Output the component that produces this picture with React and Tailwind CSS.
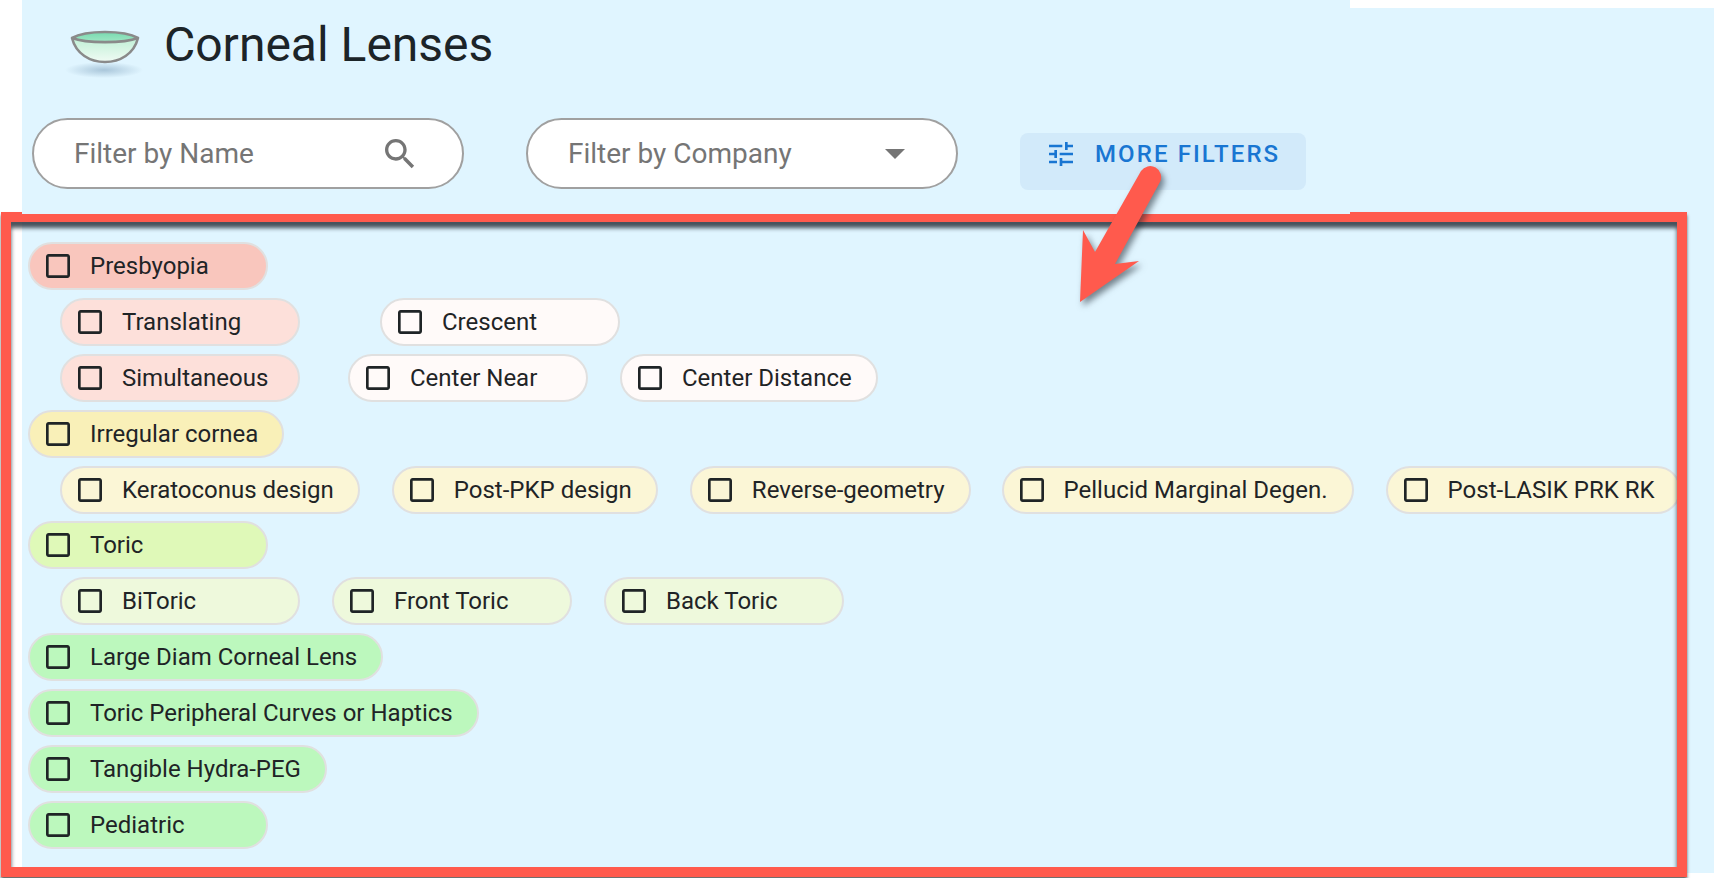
import React from "react";

const Box = () => (
  <svg viewBox="0 0 24 24" className="w-8 h-8 shrink-0" fill="#1f2426">
    <path d="M19 5v14H5V5h14m0-2H5c-1.1 0-2 .9-2 2v14c0 1.1.9 2 2 2h14c1.1 0 2-.9 2-2V5c0-1.1-.9-2-2-2z" />
  </svg>
);

const Chip = ({ label, bg, className = "" }) => (
  <div
    className={`flex items-center h-[48px] min-w-[240px] pl-[12px] pr-[24px] gap-[16px] rounded-full border-2 border-[#e0e0e0] text-[24px] leading-none text-[#1f2426] whitespace-nowrap ${bg} ${className}`}
  >
    <Box />
    <span>{label}</span>
  </div>
);

const Row = ({ children }) => <div className="flex pl-[32px]">{children}</div>;

const Lens = () => (
  <svg viewBox="0 0 90 60" className="w-[90px] h-[60px] shrink-0">
    <defs>
      <linearGradient id="lensBody" x1="0" y1="0" x2="0" y2="1">
        <stop offset="0" stopColor="#c0f0d6" />
        <stop offset="1" stopColor="#f0fbf4" />
      </linearGradient>
      <linearGradient id="lensTop" x1="0" y1="0" x2="0" y2="1">
        <stop offset="0" stopColor="#78dab0" />
        <stop offset="1" stopColor="#9fe6c4" />
      </linearGradient>
      <radialGradient id="lensShadow">
        <stop offset="0" stopColor="#a9c6da" />
        <stop offset="1" stopColor="#e0f5ff" />
      </radialGradient>
    </defs>
    <ellipse cx="42" cy="52" rx="39" ry="8" fill="url(#lensShadow)" />
    <path d="M10 20 C14 36 28 44 43 44 C58 44 72 36 76 20 C62 25.5 24 25.5 10 20Z" fill="url(#lensBody)" />
    <path d="M10 20 C24 12 62 12 76 20 C62 25.5 24 25.5 10 20Z" fill="url(#lensTop)" />
    <path d="M10 20 C24 12 62 12 76 20 C62 25.5 24 25.5 10 20Z M10 20 C14 36 28 44 43 44 C58 44 72 36 76 20" fill="none" stroke="#8a8a8a" strokeWidth="2.6" strokeLinejoin="round" />
  </svg>
);

export default function App() {
  const red = "bg-[#f9c6bd]", red2 = "bg-[#fde0da]", white = "bg-[#fffaf9]";
  const y1 = "bg-[#f9f0b8]", y2 = "bg-[#fbf6d6]";
  const g1 = "bg-[#dff9b8]", g2 = "bg-[#eef9dc]", g3 = "bg-[#bcf8bd]";
  return (
    <div className="relative w-full h-[878px] overflow-hidden bg-white pl-[22px] font-['Roboto',sans-serif]">
      <div className="h-[873px] bg-[#e0f5ff]">
        <div className="relative z-10 flex flex-col w-[1328px] h-[214px] bg-[#e0f5ff]">
          <div className="flex items-center h-[88px] pl-[40px] gap-[12px] pt-[8px]">
            <Lens />
            <h1 className="text-[48px] leading-none text-[#1c2428] -mt-[7px]">Corneal Lenses</h1>
          </div>
          <div className="flex items-start pl-[10px] pt-[30px]">
            <div className="flex items-center justify-between w-[432px] h-[71px] rounded-full border-2 border-[#a0a0a0] bg-white pl-[40px] pr-[42px] text-[28px] text-[#757575]">
              <span>Filter by Name</span>
              <svg viewBox="0 0 24 24" className="w-[40px] h-[40px]" fill="#757575">
                <path d="M15.5 14h-.79l-.28-.27C15.41 12.59 16 11.11 16 9.5 16 5.91 13.09 3 9.5 3S3 5.91 3 9.5 5.91 16 9.5 16c1.61 0 3.09-.59 4.23-1.57l.27.28v.79l5 4.99L20.49 19l-4.99-5zm-6 0C7.01 14 5 11.99 5 9.5S7.01 5 9.5 5 14 7.01 14 9.5 11.99 14 9.5 14z" />
              </svg>
            </div>
            <div className="flex items-center justify-between w-[432px] h-[71px] ml-[62px] rounded-full border-2 border-[#a0a0a0] bg-white pl-[40px] pr-[51px] text-[28px] text-[#757575]">
              <span>Filter by Company</span>
              <svg viewBox="0 0 20 10" className="w-[20px] h-[10px]" fill="#757575">
                <path d="M0 0h20L10 10z" />
              </svg>
            </div>
            <div className="flex items-start w-[286px] h-[57px] ml-[62px] mt-[15px] rounded-lg bg-[#d2eafa] pl-[25px] pt-[5px] text-[#1976d2]">
              <svg viewBox="0 0 24 24" className="w-[32px] h-[32px]" fill="#1976d2">
                <path d="M3 17v2h6v-2H3zM3 5v2h10V5H3zm10 16v-2h8v-2h-8v-2h-2v6h2zM7 9v2H3v2h4v2h2V9H7zm14 4v-2H11v2h10zm-6-4h2V7h4V5h-4V3h-2v6z" />
              </svg>
              <span className="ml-[18px] text-[24px] leading-[32px] font-medium tracking-[2.1px]">MORE FILTERS</span>
            </div>
          </div>
        </div>

        <div className="flex flex-col gap-[7.9px] pl-[6px] pt-[28px]">
          <div className="flex"><Chip label="Presbyopia" bg={red} /></div>
          <Row>
            <Chip label="Translating" bg={red2} />
            <Chip label="Crescent" bg={white} className="ml-[80px]" />
          </Row>
          <Row>
            <Chip label="Simultaneous" bg={red2} />
            <Chip label="Center Near" bg={white} className="ml-[48px]" />
            <Chip label="Center Distance" bg={white} className="ml-[32px]" />
          </Row>
          <div className="flex"><Chip label="Irregular cornea" bg={y1} /></div>
          <Row>
            <Chip label="Keratoconus design" bg={y2} />
            <Chip label="Post-PKP design" bg={y2} className="ml-[32px]" />
            <Chip label="Reverse-geometry" bg={y2} className="ml-[32px]" />
            <Chip label="Pellucid Marginal Degen." bg={y2} className="ml-[31px]" />
            <Chip label="Post-LASIK PRK RK" bg={y2} className="ml-[32px]" />
          </Row>
          <div className="flex"><Chip label="Toric" bg={g1} /></div>
          <Row>
            <Chip label="BiToric" bg={g2} />
            <Chip label="Front Toric" bg={g2} className="ml-[32px]" />
            <Chip label="Back Toric" bg={g2} className="ml-[32px]" />
          </Row>
          <div className="flex"><Chip label="Large Diam Corneal Lens" bg={g3} /></div>
          <div className="flex"><Chip label="Toric Peripheral Curves or Haptics" bg={g3} /></div>
          <div className="flex"><Chip label="Tangible Hydra-PEG" bg={g3} /></div>
          <div className="flex"><Chip label="Pediatric" bg={g3} /></div>
        </div>
      </div>

      {/* white corner of the pasted screenshot */}
      <div className="absolute right-0 top-0 w-[364px] h-[8px] bg-white" />

      {/* red annotation frame */}
      <div className="absolute left-[1px] top-[212px] w-[1686px] h-[665px] border-[10px] border-[#ff5a4d] shadow-[0_3px_3px_rgba(40,40,40,.7),inset_0_6px_4px_rgba(30,40,50,.8)] pointer-events-none" />
      <div className="absolute z-10 left-[24px] top-[212px] w-[1326px] h-[2px] bg-[#e0f5ff]" />

      {/* arrow annotation */}
      <svg className="absolute z-20 left-0 top-0 w-[1714px] h-[878px] pointer-events-none drop-shadow-[3px_4px_3px_rgba(30,40,50,.55)]" viewBox="0 0 1714 878">
        <path d="M1080 302 L1083 230 L1095 252 L1141 171 A11 11 0 0 1 1160 182 L1115 264 L1139 261 Z" fill="#ff5a4d" />
      </svg>
    </div>
  );
}
